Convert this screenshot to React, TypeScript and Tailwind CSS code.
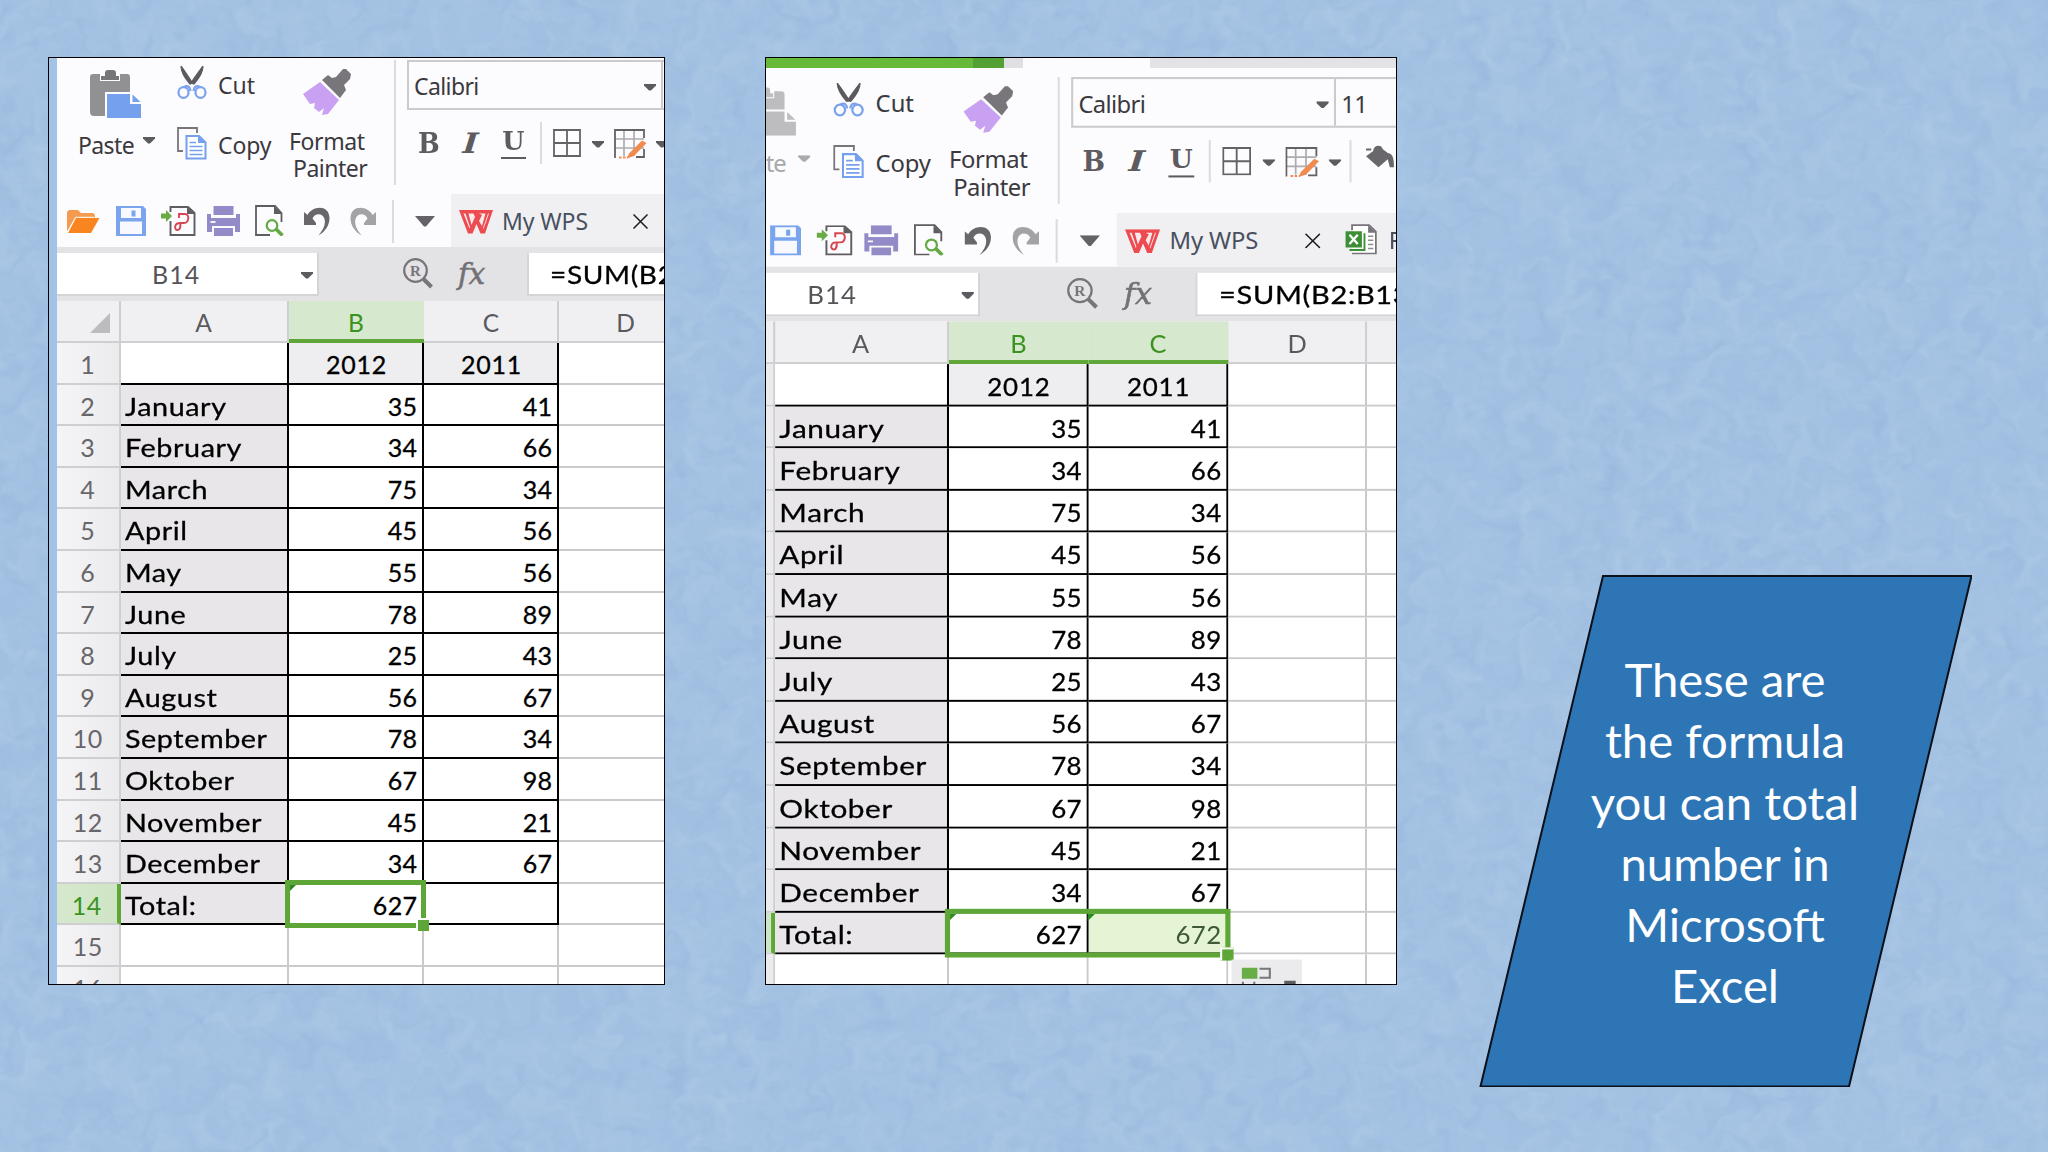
import React from 'react';

interface SheetWindowProps {
  // last selected column of the total row
  selectTo: 'B' | 'C';
  pasteDisabled?: boolean;
  totalC?: string;
}

const ROWS: [string, string, string][] = [
  ['January', '35', '41'],
  ['February', '34', '66'],
  ['March', '75', '34'],
  ['April', '45', '56'],
  ['May', '55', '56'],
  ['June', '78', '89'],
  ['July', '25', '43'],
  ['August', '56', '67'],
  ['September', '78', '34'],
  ['Oktober', '67', '98'],
  ['November', '45', '21'],
  ['December', '34', '67'],
];

const COLS = 'grid grid-cols-[63.5px_168px_135px_135px_134px_60px] grid-rows-[100%]';

function Caret({ className = '' }: { className?: string }) {
  return (
    <svg viewBox="0 0 12 7" className={`w-[12px] h-[7px] shrink-0 fill-[#5d5b60] ${className}`}>
      <path d="M0 0h12v1.5L7 6.5H5L0 1.5z" />
    </svg>
  );
}

function PasteIcon({ disabled }: { disabled?: boolean }) {
  const board = disabled ? '#bdbdbf' : '#919093';
  return (
    <svg viewBox="0 0 52 48" className="w-[52px] h-[48px] ml-[11px]">
      <path d="M3 4h7v7h20V4h7a3 3 0 0 1 3 3v15H15v24H4a4 4 0 0 1-4-4V7a3 3 0 0 1 3-3z" fill={board} />
      <path d="M11 6h4V3a3 3 0 0 1 3-3h5a3 3 0 0 1 3 3v3h3v4H11z" fill={disabled ? '#bdbdbf' : '#77757a'} />
      <path d="M17 24h23v10h11v14H17z" fill={disabled ? '#bdbdbf' : '#74a0ee'} />
      <path d="M42.500 24.500v7.500h8z" fill={disabled ? '#bdbdbf' : '#74a0ee'} />
    </svg>
  );
}

function CutIcon() {
  return (
    <svg viewBox="0 0 30 34" className="w-[30px] h-[34px]">
      <path d="M4 0c0 5 2 10 9 18l2.500-1C11 10 7 4 4 0zM26 0c0 5-2 10-9 18l-3-1C18.500 10 23 4 26 0z" fill="#5b5a5e" stroke="#5b5a5e" strokeWidth="1.200" />
      <g fill="none" stroke="#7ba2ec" strokeWidth="2.200">
        <ellipse cx="6.500" cy="26.500" rx="5" ry="5.300" />
        <ellipse cx="23.500" cy="26.500" rx="5" ry="5.300" />
        <path d="M7 21c4-2 6 0 6.500 4M23 21c-4-2-6 0-6.500 4" />
      </g>
    </svg>
  );
}

function CopyIcon() {
  return (
    <svg viewBox="0 0 30 33" className="w-[30px] h-[33px]">
      <path d="M20 6V1H1v23h5" fill="none" stroke="#77757a" strokeWidth="1.800" />
      <path d="M9.500 9H22l6.500 6.500V31.500h-19z" fill="#fff" stroke="#74a0ee" strokeWidth="2" />
      <path d="M21 8l8 8h-8z" fill="#74a0ee" />
      <path d="M12.500 15.500H19M12.500 19.500h13M12.500 23.500h13M12.500 27.500h13" stroke="#74a0ee" strokeWidth="1.700" />
    </svg>
  );
}

function BrushIcon() {
  return (
    <svg viewBox="0 0 48 48" className="w-[48px] h-[48px] ml-[14px]">
      <path d="M29 10l4-1 7-8 3 0 5 5-1 5-6 6 2 5-6 8L19 12l6-5z" fill="#78767b" />
      <path d="M17 14l19 18-11 14-6 1 2-7-5 4-5-4 1-5-5 1-7-10z" fill="#c9a1f2" />
    </svg>
  );
}

function BordersIcon() {
  return (
    <svg viewBox="0 0 28 28" className="w-[28px] h-[28px]">
      <path d="M1 1h26v26H1zM14 1v26M1 14h26" fill="none" stroke="#646267" strokeWidth="1.800" />
    </svg>
  );
}

function DrawBorderIcon() {
  return (
    <svg viewBox="0 0 33 30" className="w-[33px] h-[30px]">
      <path d="M10 2v25M20 2v25M1 10h29M1 19h29" stroke="#aeacb0" strokeWidth="1.700" />
      <path d="M1 29V1h29v8M30 20v8h-8" fill="none" stroke="#646267" strokeWidth="1.800" />
      <path d="M28 11.500l4.500 2.500L20 27l-7 2.500 2-5z" fill="#f18a4e" />
      <path d="M5 28.500h9" stroke="#f18a4e" strokeWidth="2" strokeDasharray="2.500 1.500" />
    </svg>
  );
}

function BucketIcon() {
  return (
    <svg viewBox="0 0 28 32" className="w-[28px] h-[32px]">
      <path d="M8 7C8 1 16 0 17 5l5 4c5 1 6 5 6 14h-4l-2-8-9 8L1 12z" fill="#69676b" />
      <path d="M1 5.500h5" stroke="#69676b" strokeWidth="2" />
    </svg>
  );
}

function FolderIcon() {
  return (
    <svg viewBox="0 0 33 24" className="w-[33px] h-[24px]">
      <path d="M0 21V2l2-2h9l3 3h12l2 2v3H9z" fill="#f49b50" />
      <path d="M9 8h23.500L24 23H1z" fill="#f98520" />
      <path d="M27.500 7.300H8.500L3 17.500" fill="none" stroke="#fff" strokeWidth="1" />
    </svg>
  );
}

function SaveIcon() {
  return (
    <svg viewBox="0 0 30 30" className="w-[30px] h-[30px]">
      <path d="M0 0h27l3 3v27H0z" fill="#7aa5ee" />
      <path d="M5 2h20v10H5zM4 15.500h22V28H4z" fill="#f7f9fe" />
      <path d="M15.500 4.500h4v6h-4z" fill="#7aa5ee" />
    </svg>
  );
}

function PdfIcon() {
  return (
    <svg viewBox="0 0 35 30" className="w-[35px] h-[30px]">
      <path d="M9.500 6V1H27l6.500 6v22h-24V15" fill="none" stroke="#5f5d61" strokeWidth="1.900" />
      <path d="M26 1v7h8z" fill="#5f5d61" />
      <path d="M0 7.500h5V4l6 6-6 6v-3.500H0z" fill="#6aab45" />
      <path d="M18 12V8h6c5 0 4 9-1 9h-4c-6 0-6 7-2.500 7 3 0 3-3 3-7" fill="none" stroke="#d64650" strokeWidth="1.900" />
    </svg>
  );
}

function PrinterIcon() {
  return (
    <svg viewBox="0 0 33 30" className="w-[33px] h-[30px]">
      <path d="M6.500 0h20v9h-20zM0 8h4v4h25V8h4v18h-5v-6H5v6H0z" fill="#938bc8" />
      <path d="M4 12h25v8H4zM7 22h19v8H7z" fill="#938bc8" />
      <path d="M3.500 16h5" stroke="#fff" strokeWidth="1.800" />
    </svg>
  );
}

function PreviewIcon() {
  return (
    <svg viewBox="0 0 29 31" className="w-[29px] h-[31px]">
      <path d="M15 30H1V1h19l6.500 7v9" fill="none" stroke="#5f5d61" strokeWidth="1.800" />
      <path d="M19 1v8h8z" fill="#5f5d61" />
      <circle cx="17" cy="20.500" r="5.300" fill="none" stroke="#63a944" strokeWidth="2.200" />
      <path d="M21 24l6.500 6.500" stroke="#63a944" strokeWidth="3.600" />
    </svg>
  );
}

function UndoIcon({ redo }: { redo?: boolean }) {
  return (
    <svg viewBox="0 0 26 29" className={`w-[26px] h-[29px] ${redo ? '-scale-x-100' : ''}`}>
      <path d="M0 5l3.500 3C8-1 25-3 25.500 11c0 8-5 14-11 17.500C19 23 22 18 20.500 12 19 5.500 10.500 6 8.500 11.500L12 16v2H0z" fill={redo ? '#a3a2a5' : '#69676b'} />
    </svg>
  );
}

function WpsLogo() {
  return (
    <svg viewBox="0 0 34 24" className="w-[34px] h-[24px] mt-[2px]">
      <path d="M0 0h34L26 23.500h-4.500L17.500 14l-4 9.500H9z" fill="#ee4b50" />
      <path d="M4.500 3.500h2L11 17l-.5 1.500zM9.500 3.500h5L16 7l-3.500 8zM20 3.500h6.500L23 16l-3-5 3-6zM29 3.500h1L24.500 19l-.5-1z" fill="#f9e9ec" />
    </svg>
  );
}

function CloseIcon() {
  return (
    <svg viewBox="0 0 15 15" className="w-[15px] h-[15px]">
      <path d="M.5.500l14 14M14.500.500l-14 14" stroke="#1c1b1e" strokeWidth="1.500" />
    </svg>
  );
}

function SheetFileIcon() {
  return (
    <svg viewBox="0 0 31 30" className="w-[31px] h-[30px]">
      <path d="M6.500 6V1H23l6.500 6.500V29h-23" fill="#fff" stroke="#77757a" strokeWidth="1.700" />
      <path d="M22 1v7.500h8z" fill="#77757a" />
      <path d="M22 12h5M22 16h5M22 20h5M22 24h5" stroke="#8d8b90" strokeWidth="1.500" />
      <path d="M0 7h16v16H0z" fill="#3c8f35" />
      <path d="M18.500 9v16.500H4" fill="none" stroke="#3c8f35" strokeWidth="1.800" />
      <path d="M4 10.500l8 9M12 10.500l-8 9" stroke="#fff" strokeWidth="2.200" />
    </svg>
  );
}

function LookupIcon() {
  return (
    <svg viewBox="0 0 30 31" className="w-[30px] h-[31px]">
      <circle cx="12.500" cy="12.500" r="11.300" fill="none" stroke="#77757a" strokeWidth="2.200" />
      <path d="M20.500 21l8 8" stroke="#77757a" strokeWidth="4" />
      <text x="12.500" y="17.500" textAnchor="middle" fontFamily="Liberation Serif" fontWeight="700" fontSize="15" fill="#77757a">R</text>
    </svg>
  );
}

function Ribbon({ pasteDisabled }: { pasteDisabled?: boolean }) {
  return (
    <div className="flex items-start h-[136px] text-[23px] leading-[27px] text-[#3a393d]">
      <div className={`w-[78px] ml-[22px] mt-[12px] shrink-0 ${pasteDisabled ? 'text-[#a9a8ab]' : ''}`}>
        <PasteIcon disabled={pasteDisabled} />
        <div className="flex mt-[14px]">
          <span className={pasteDisabled ? 'w-[64px] -ml-[2px] mr-[2px] tracking-[-1px]' : 'w-[64px] -ml-[1px] mr-[1px] tracking-[-0.6px]'}>Paste</span>
          <Caret className={pasteDisabled ? 'mt-[5px] opacity-50' : 'mt-[5px]'} />
        </div>
      </div>
      <div className="w-[100px] ml-[20px] mt-[8px] shrink-0">
        <div className="flex h-[61px]">
          <CutIcon />
          <span className="ml-[11px] mt-[6px]">Cut</span>
        </div>
        <div className="flex">
          <CopyIcon />
          <span className="ml-[11px] mt-[5px] tracking-[-0.1px]">Copy</span>
        </div>
      </div>
      <div className="w-[82px] ml-[12px] mt-[10px] shrink-0">
        <BrushIcon />
        <div className="mt-[12px] tracking-[-0.4px]">Format</div>
        <div className="ml-[4px] tracking-[-0.5px]">Painter</div>
      </div>
      <div className="w-[2px] h-[125px] ml-[23px] mt-[2px] bg-[#dcdbde] shrink-0" />
      <div className="ml-[11px] mt-[2px] shrink-0">
        <div className="flex h-[50px] w-[340px] border-2 border-[#cbcacd]">
          <div className="flex w-[254px] items-center border-r-2 border-[#cbcacd] pl-[5px] pr-[5px]">
            <span className="grow mt-[3px] tracking-[-0.6px]">Calibri</span>
            <Caret className="mt-[5px]" />
          </div>
          <span className="ml-[5px] mt-[11px] tracking-[-0.5px]">11</span>
        </div>
        <div className="flex items-start pt-[12px] text-[#5d5b60]">
          <span className="w-[42px] ml-[11px] mt-[8px] font-['DejaVu_Serif'] font-bold text-[28px] scale-x-[0.92] origin-left">B</span>
          <span className="w-[40px] mt-[8px] font-['DejaVu_Serif'] font-bold italic text-[28px]">
            <span className="inline-block scale-x-[1.15] skew-x-[-4deg] ml-[4px]">I</span>
          </span>
          <span className="w-[25px] h-[31px] ml-[1px] mt-[6px] border-b-2 border-[#5d5b60] text-center font-['DejaVu_Serif'] font-bold text-[26px] leading-[26px]">
            <span className="inline-block -ml-[1px] scale-x-[0.98]">U</span>
          </span>
          <div className="w-[2px] h-[42px] ml-[14px] bg-[#dcdbde]" />
          <div className="ml-[11px] mt-[7px]"><BordersIcon /></div>
          <Caret className="ml-[11px] mt-[19px]" />
          <div className="ml-[10px] mt-[7px]"><DrawBorderIcon /></div>
          <Caret className="ml-[9px] mt-[19px]" />
          <div className="w-[2px] h-[42px] ml-[8px] bg-[#dcdbde]" />
          <div className="ml-[13px] mt-[4px]"><BucketIcon /></div>
        </div>
      </div>
    </div>
  );
}

function QuickBar() {
  return (
    <div className="flex h-[53px] text-[23px] leading-[27px] text-[#48505f]">
      <div className="flex w-[394px] shrink-0">
        <div className="ml-[10px] mt-[16px] w-[48.5px]"><FolderIcon /></div>
        <div className="mt-[12px] w-[45px]"><SaveIcon /></div>
        <div className="mt-[12px] w-[46px]"><PdfIcon /></div>
        <div className="mt-[12px] w-[48.5px]"><PrinterIcon /></div>
        <div className="mt-[11px] w-[49px]"><PreviewIcon /></div>
        <div className="mt-[13px] w-[46px]"><UndoIcon /></div>
        <div className="mt-[13px] w-[42px]"><UndoIcon redo /></div>
        <div className="mt-[6px] h-[43px] w-[2px] bg-[#dcdbde]" />
        <svg viewBox="0 0 20 11" className="ml-[21px] mt-[22px] w-[20px] h-[11px] fill-[#646267]">
          <path d="M0 0h20L11 10.500H9z" />
        </svg>
      </div>
      <div className="flex grow bg-[#f0eff1]">
        <div className="ml-[8px] mt-[14px] w-[43px]"><WpsLogo /></div>
        <span className="mt-[14px] w-[131px] tracking-[-0.1px]">My WPS</span>
        <div className="mt-[20px] w-[39px]"><CloseIcon /></div>
        <div className="mt-[11px] w-[42px]"><SheetFileIcon /></div>
        <span className="mt-[14px]">Form</span>
      </div>
    </div>
  );
}

function FormulaBar() {
  return (
    <div className="flex h-[54px] pt-[6px] bg-[#e3e2e5] font-['Lato'] text-[25px] leading-[43px]">
      <div className="flex w-[262px] h-[43px] border-r-2 border-b-2 border-[#d5d4d7] bg-white text-[#555459]">
        <span className="ml-[95px] w-[149px] tracking-[1px]">B14</span>
        <Caret className="mt-[19px]" />
      </div>
      <div className="ml-[84px] mt-[5px]"><LookupIcon /></div>
      <span className="ml-[25px] w-[69px] font-['DejaVu_Serif'] italic text-[29px] leading-[42px] text-[#737176] [-webkit-text-stroke:0.6px_#737176]">fx</span>
      <div className="grow w-0 h-[43px] border-l-2 border-b-2 border-[#d5d4d7] bg-white pl-[21px] whitespace-nowrap text-black">
        <span className="inline-block origin-left scale-x-[1.12] tracking-[0.6px] [-webkit-text-stroke:0.3px_black]">=SUM(B2:B13)</span>
      </div>
    </div>
  );
}

function ColumnHeads({ selectTo }: { selectTo: 'B' | 'C' }) {
  return (
    <div className={`${COLS} h-[42px] bg-[#f0eff1] font-['Lato'] text-[24.5px] leading-[43px] text-center text-[#5a595e]`}>
      <div className="flex items-end justify-end border-r-2 border-b-2 border-[#cfced1] pr-[9px] pb-[8px]">
        <svg viewBox="0 0 20 20" className="w-[20px] h-[20px] fill-[#bcbbbe]">
          <path d="M20 0v20H0z" />
        </svg>
      </div>
      <div className="border-r-2 border-b-2 border-[#cfced1]">A</div>
      <div className="border-b-4 border-[#5da637] bg-[#d6e8cd] text-[#3b931f]">B</div>
      {selectTo === 'C' ? (
        <div className="border-b-4 border-[#5da637] bg-[#d6e8cd] text-[#3b931f]">C</div>
      ) : (
        <div className="border-r-2 border-b-2 border-[#cfced1] pl-[2px]">C</div>
      )}
      <div className="border-r-2 border-b-2 border-[#cfced1] pl-[2px]">D</div>
      <div className="border-b-2 border-[#cfced1]" />
    </div>
  );
}

function RowHead({ n, active }: { n: number; active?: boolean }) {
  return (
    <div
      className={`text-center tracking-[0.6px] bg-gradient-to-r ${
        active
          ? 'border-r-4 border-b-2 border-r-[#5da637] border-b-[#cfced1] from-[#d6e8cd] to-[#cfe5c5] text-[#3b931f]'
          : 'border-r-2 border-b-2 border-[#cfced1] from-[#f5f4f6] to-[#ebeaed] text-[#67666b]'
      }`}
    >
      {n}
    </div>
  );
}

function Label({ children }: { children: string }) {
  return (
    <div className="border-r-2 border-b-2 border-black bg-[#e8e6e9] pl-[4px] text-[25px]">
      <span className="inline-block origin-left scale-x-[1.15] tracking-[0.5px] [-webkit-text-stroke:0.3px_black]">
        {children}
      </span>
    </div>
  );
}

function Sheet({ selectTo, totalC }: SheetWindowProps) {
  const plain = 'border-r-2 border-b-2 border-[#cbc9cc] bg-white';
  const value = 'border-r-2 border-b-2 border-black bg-white text-right pr-[4px] tracking-[0.4px] [-webkit-text-stroke:0.3px_black]';
  const year = 'border-r-2 border-b-2 border-black bg-[#eeedef] text-center pl-[3px] tracking-[0.8px] [-webkit-text-stroke:0.3px_black]';
  const row = `${COLS} h-[41.6px]`;

  return (
    <div className="relative font-['Lato'] text-[25px] leading-[42.6px] text-black">
      <div className={row}>
        <RowHead n={1} />
        <div className="border-r-2 border-b-2 border-black bg-white" />
        <div className={year}>2012</div>
        <div className={year}>2011</div>
        <div className={plain} />
        <div className={plain} />
      </div>
      {ROWS.map(([month, b, c], i) => (
        <div key={month} className={row}>
          <RowHead n={i + 2} />
          <Label>{month}</Label>
          <div className={value}>{b}</div>
          <div className={value}>{c}</div>
          <div className={plain} />
          <div className={plain} />
        </div>
      ))}
      <div className={row}>
        <RowHead n={14} active />
        <Label>Total:</Label>
        <div className={value}>627</div>
        <div className={totalC ? 'border-r-2 border-b-2 border-black bg-[#e4f4d5] text-right pr-[4px] tracking-[0.4px] text-[#3f5a37]' : value}>{totalC}</div>
        <div className={plain} />
        <div className={plain} />
      </div>
      {[15, 16].map((n) => (
        <div key={n} className={row}>
          <RowHead n={n} />
          <div className={plain} />
          <div className={plain} />
          <div className={plain} />
          <div className={plain} />
          <div className={plain} />
        </div>
      ))}

      {/* Selection frame with its fill handle */}
      <div
        className={`absolute left-[228px] top-[537px] h-[48px] border-[5px] border-[#5da637] ${
          selectTo === 'C' ? 'w-[276px]' : 'w-[141px]'
        }`}
      >
        <div className="absolute left-0 top-0 border-t-[6px] border-r-[6px] border-t-[#2c8a22] border-r-transparent" />
        {selectTo === 'C' && (
          <div className="absolute left-[133px] top-0 border-t-[7px] border-r-[7px] border-t-[#2c8a22] border-r-transparent" />
        )}
        <div className="absolute right-[-8px] bottom-[-8px] w-[13px] h-[13px] border-t-2 border-l-2 border-white bg-[#5da637]" />
      </div>

      {selectTo === 'C' && (
        <div className="absolute left-[505px] top-[587px] w-[68px] h-[42px] bg-[#ebebed]">
          <svg viewBox="0 0 68 42" className="w-[68px] h-[42px]">
            <path d="M10 8h15v11H10z" fill="#68ad46" />
            <path d="M27 9h10v9H27M11 22v12M22 22v8h4M32 24v3" fill="none" stroke="#77757a" strokeWidth="2" />
            <path d="M51 21h11v3l-4 4h-3l-4-4z" fill="#5d5b60" />
          </svg>
        </div>
      )}
    </div>
  );
}

function SheetWindow(props: SheetWindowProps) {
  return (
    <div className="w-[695px] bg-[#fcfbfd] font-['Noto_Sans']">
      <Ribbon pasteDisabled={props.pasteDisabled} />
      <QuickBar />
      <FormulaBar />
      <ColumnHeads selectTo={props.selectTo} />
      <Sheet {...props} />
    </div>
  );
}

// Mottled paper behind the slide, drawn oversize so the warped edges fall outside
function PaperTexture() {
  return (
    <svg className="absolute -left-[80px] -top-[80px] w-[2208px] h-[1312px]">
      <filter id="paper" x="0" y="0" width="100%" height="100%" colorInterpolationFilters="sRGB">
        <feTurbulence type="fractalNoise" baseFrequency="0.03 0.035" numOctaves="3" seed="8" result="noise" />
        <feDisplacementMap in="noise" in2="noise" scale="60" xChannelSelector="R" yChannelSelector="G" />
        <feColorMatrix values="0.09 0 0 0 0.595  0.07 0 0 0 0.722  0.04 0 0 0 0.866  0 0 0 0 1" />
      </filter>
      <rect width="100%" height="100%" filter="url(#paper)" />
    </svg>
  );
}

export default function App() {
  return (
    <div className="relative flex items-start w-[2048px] h-[1152px] overflow-hidden bg-[#a4c1e2]">
      <PaperTexture />

      <div className="relative shrink-0 w-[617px] h-[928px] ml-[48px] mt-[57px] pl-[8px] overflow-hidden border border-black bg-[#a3c3e6]">
        <SheetWindow selectTo="B" />
      </div>

      <div className="relative shrink-0 w-[632px] h-[928px] ml-[100px] mt-[57px] overflow-hidden border border-black bg-[#fcfbfd]">
        <div className="flex h-[10px]">
          <div className="w-[207px] bg-[#67b93a]" />
          <div className="w-[31px] bg-[#53a034]" />
          <div className="w-[19px] bg-[#e0dfe3]" />
          <div className="w-[127px]" />
          <div className="grow bg-[#e3e2e6]" />
        </div>
        <div className="mt-[6.5px] -ml-[57.5px] origin-top-left scale-x-[1.0347] scale-y-[1.0144]">
          <SheetWindow selectTo="C" totalC="672" pasteDisabled />
        </div>
      </div>

      <div className="relative shrink-0 w-[494px] h-[513px] ml-[81px] mt-[574px]">
        <svg viewBox="0 0 494 513" className="absolute inset-0 w-full h-full">
          <path d="M125 2h368.500L371 512.500H2.500z" fill="#2e75b6" stroke="#0a0f18" strokeWidth="2" />
        </svg>
        <p className="relative pt-[74px] w-[494px] text-center font-['Lato'] text-[47.3px] leading-[61.3px] text-white">
          These are<br />the formula<br />you can total<br />number in<br />Microsoft<br />Excel
        </p>
      </div>
    </div>
  );
}
